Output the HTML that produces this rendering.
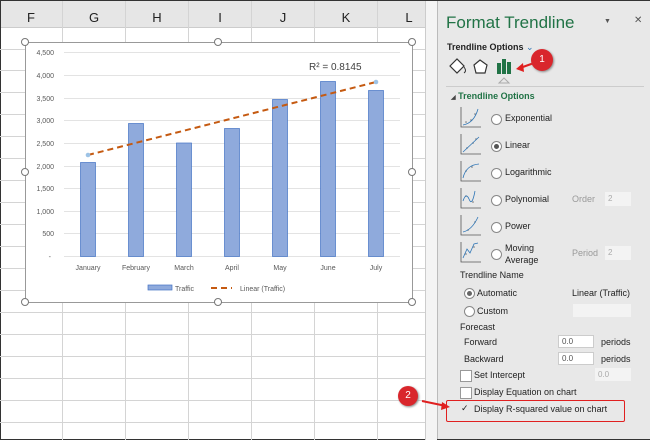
<!DOCTYPE html><html><head><style>
body{margin:0;width:650px;height:440px;overflow:hidden;font-family:"Liberation Sans",sans-serif;background:#fff;position:relative}
.a{position:absolute}
.t{font-size:9px;color:#222;position:absolute;white-space:nowrap}
.rad{position:absolute;width:9px;height:9px;border:1px solid #888;border-radius:50%;background:#fff}
.cb{position:absolute;width:10px;height:10px;border:1px solid #999;background:#fff}
.in{position:absolute;height:13px;background:#fff;border:1px solid #ccc;font-size:8px;color:#555;padding-left:3px;box-sizing:border-box;line-height:12px}
.dis{position:absolute;background:#f3f3f3}
</style></head><body>
<div class="a" style="left:0;top:0;width:650px;height:440px;border:1px solid #333;box-sizing:border-box"></div>
<div class="a" style="left:1px;top:1px;width:424px;height:26px;background:#e6e6e6;border-bottom:1px solid #ccc"></div>
<svg class="a" style="left:0;top:0" width="437" height="440">
<g stroke="#d4d4d4" stroke-width="1">
<line x1="62.5" y1="1" x2="62.5" y2="440"/><line x1="125.5" y1="1" x2="125.5" y2="440"/><line x1="188.5" y1="1" x2="188.5" y2="440"/><line x1="251.5" y1="1" x2="251.5" y2="440"/><line x1="314.5" y1="1" x2="314.5" y2="440"/><line x1="377.5" y1="1" x2="377.5" y2="440"/>
<line x1="0" y1="49.5" x2="425" y2="49.5"/><line x1="0" y1="70.5" x2="425" y2="70.5"/><line x1="0" y1="92.5" x2="425" y2="92.5"/><line x1="0" y1="114.5" x2="425" y2="114.5"/><line x1="0" y1="136.5" x2="425" y2="136.5"/><line x1="0" y1="158.5" x2="425" y2="158.5"/><line x1="0" y1="180.5" x2="425" y2="180.5"/><line x1="0" y1="202.5" x2="425" y2="202.5"/><line x1="0" y1="224.5" x2="425" y2="224.5"/><line x1="0" y1="246.5" x2="425" y2="246.5"/><line x1="0" y1="268.5" x2="425" y2="268.5"/><line x1="0" y1="290.5" x2="425" y2="290.5"/><line x1="0" y1="312.5" x2="425" y2="312.5"/><line x1="0" y1="334.5" x2="425" y2="334.5"/><line x1="0" y1="356.5" x2="425" y2="356.5"/><line x1="0" y1="378.5" x2="425" y2="378.5"/><line x1="0" y1="400.5" x2="425" y2="400.5"/><line x1="0" y1="422.5" x2="425" y2="422.5"/>
</g>
<rect x="425" y="1" width="12" height="439" fill="#f4f4f4"/><line x1="425.5" y1="1" x2="425.5" y2="440" stroke="#ccc"/>
<g font-size="13" fill="#222" text-anchor="middle" font-family="Liberation Sans"><text x="31" y="22">F</text><text x="94" y="22">G</text><text x="157" y="22">H</text><text x="220" y="22">I</text><text x="283" y="22">J</text><text x="346" y="22">K</text><text x="409" y="22">L</text></g>
<rect x="25.5" y="42.5" width="387" height="260" fill="#fff" stroke="#999"/>
<g stroke="#e3e3e3"><line x1="64" y1="52.5" x2="400" y2="52.5"/><line x1="64" y1="75.5" x2="400" y2="75.5"/><line x1="64" y1="98.5" x2="400" y2="98.5"/><line x1="64" y1="120.5" x2="400" y2="120.5"/><line x1="64" y1="143.5" x2="400" y2="143.5"/><line x1="64" y1="166.5" x2="400" y2="166.5"/><line x1="64" y1="188.5" x2="400" y2="188.5"/><line x1="64" y1="211.5" x2="400" y2="211.5"/><line x1="64" y1="233.5" x2="400" y2="233.5"/><line x1="64" y1="256.5" x2="400" y2="256.5"/></g>
<g font-size="7" fill="#595959" text-anchor="end"><text x="54" y="55">4,500</text><text x="54" y="78">4,000</text><text x="54" y="101">3,500</text><text x="54" y="123">3,000</text><text x="54" y="146">2,500</text><text x="54" y="169">2,000</text><text x="54" y="191">1,500</text><text x="54" y="214">1,000</text><text x="54" y="236">500</text><text x="51" y="259">-</text></g>
<g fill="#8faadc" stroke="#4472c4" stroke-width=".7">
<rect x="80.5" y="162.5" width="15" height="94"/><rect x="128.5" y="123.5" width="15" height="133"/><rect x="176.5" y="143" width="15" height="113.5"/><rect x="224.5" y="128.5" width="15" height="128"/><rect x="272.5" y="99.5" width="15" height="157"/><rect x="320.5" y="81.5" width="15" height="175"/><rect x="368.5" y="90.5" width="15" height="166"/></g>
<line x1="88" y1="155" x2="376" y2="82" stroke="#c55a11" stroke-width="2" stroke-dasharray="6,4"/>
<circle cx="88" cy="155" r="2.3" fill="#9dc3e6"/><circle cx="376" cy="82" r="2.3" fill="#9dc3e6"/>
<text x="309" y="70" font-size="10" fill="#404040">R² = 0.8145</text>
<g font-size="7" fill="#595959" text-anchor="middle"><text x="88" y="270">January</text><text x="136" y="270">February</text><text x="184" y="270">March</text><text x="232" y="270">April</text><text x="280" y="270">May</text><text x="328" y="270">June</text><text x="376" y="270">July</text></g>
<rect x="148" y="285" width="24" height="5" fill="#8faadc" stroke="#4472c4" stroke-width=".7"/><text x="175" y="291" font-size="7" fill="#595959">Traffic</text>
<line x1="211" y1="288" x2="232" y2="288" stroke="#c55a11" stroke-width="2" stroke-dasharray="6,4"/><text x="240" y="291" font-size="7" fill="#595959">Linear (Traffic)</text>
<g fill="#fff" stroke="#777" stroke-width="1"><circle cx="25" cy="42" r="3.5"/><circle cx="218" cy="42" r="3.5"/><circle cx="412" cy="42" r="3.5"/><circle cx="25" cy="172" r="3.5"/><circle cx="412" cy="172" r="3.5"/><circle cx="25" cy="302" r="3.5"/><circle cx="218" cy="302" r="3.5"/><circle cx="412" cy="302" r="3.5"/></g>
</svg>
<div class="a" style="left:437px;top:1px;width:212px;height:438px;background:#e8e8e8;border-left:1px solid #bbb"></div>
<div class="a" style="left:446px;top:13px;font-size:17px;color:#217346">Format Trendline</div>
<div class="a" style="left:604px;top:18px;font-size:7px;color:#555">▼</div>
<div class="a" style="left:634px;top:15px;font-size:10px;color:#555">✕</div>
<div class="a" style="left:447px;top:42px;font-size:9px;font-weight:bold;color:#222">Trendline Options <span style="color:#2e75b6;font-weight:normal">⌄</span></div>
<svg class="a" style="left:446px;top:56px" width="100" height="30">
<path d="M4 10 L11 3 L18 10 L11 17 Z" fill="#fff" stroke="#333" stroke-width="1.2"/><path d="M18 11 q3 4 0 6" stroke="#333" fill="none"/>
<path d="M34 4 L41 9 L39 17 L30 17 L28 9 Z" fill="#fff" stroke="#333" stroke-width="1.2"/>
<rect x="51" y="7" width="4" height="11" fill="#217346"/><rect x="56" y="3" width="4" height="15" fill="#217346"/><rect x="61" y="6" width="4" height="12" fill="#217346"/>
<path d="M58 22 L53 27 L63 27 Z" fill="#e8e8e8" stroke="#aaa"/>
<path d="M74 12 L88 7" stroke="#e02020" stroke-width="2"/><path d="M70 13 L77 7 L78 16 Z" fill="#e02020"/>
</svg>
<div class="a" style="left:531px;top:49px;width:22px;height:22px;border-radius:50%;background:#d9262c;color:#fff;font-size:10px;text-align:center;line-height:22px;box-shadow:1px 1px 2px #888">1</div>
<div class="a" style="left:446px;top:86px;width:198px;height:1px;background:#ccc"></div>
<div class="a" style="left:451px;top:91px;font-size:9px;font-weight:bold;color:#217346"><span style="font-size:6px;color:#444">◢</span> Trendline Options</div>
<svg class="a" style="left:460px;top:106px" width="24" height="160" fill="none" stroke="#2e75b6" stroke-width=".8">
<g stroke="#555"><path d="M1 1 V21 H21"/><path d="M1 28 V48 H21"/><path d="M1 55 V75 H21"/><path d="M1 82 V102 H21"/><path d="M1 109 V129 H21"/><path d="M1 136 V156 H21"/></g>
<g fill="#777" stroke="none"><circle cx="6" cy="16" r=".8"/><circle cx="11" cy="14" r=".8"/><circle cx="15" cy="8" r=".8"/><circle cx="7" cy="42" r=".8"/><circle cx="13" cy="37" r=".8"/><circle cx="16" cy="33" r=".8"/><circle cx="6" cy="65" r=".8"/><circle cx="12" cy="61" r=".8"/><circle cx="6" cy="90" r=".8"/><circle cx="13" cy="96" r=".8"/><circle cx="8" cy="124" r=".8"/><circle cx="15" cy="116" r=".8"/><circle cx="6" cy="148" r=".8"/><circle cx="14" cy="141" r=".8"/></g>
<path d="M3 19 Q14 17 18 3"/><path d="M3 46 L19 31"/><path d="M3 72 Q6 59 19 58"/><path d="M3 95 Q6 86 9 93 Q12 101 15 85"/><path d="M3 126 Q12 124 18 111"/><path d="M3 152 L7 143 L10 147 L14 138 L18 137"/>
</svg>
<div class="rad" style="left:491px;top:114px"></div><div class="t" style="left:505px;top:113px">Exponential</div>
<div class="rad" style="left:491px;top:141px"></div><div class="a" style="left:494px;top:144px;width:5px;height:5px;border-radius:50%;background:#555"></div><div class="t" style="left:505px;top:140px">Linear</div>
<div class="rad" style="left:491px;top:168px"></div><div class="t" style="left:505px;top:167px">Logarithmic</div>
<div class="rad" style="left:491px;top:195px"></div><div class="t" style="left:505px;top:194px">Polynomial</div>
<div class="t" style="left:572px;top:194px;color:#999">Order</div><div class="dis" style="left:605px;top:192px;width:26px;height:14px"></div><div class="t" style="left:608px;top:194px;color:#aaa;font-size:8px">2</div>
<div class="rad" style="left:491px;top:222px"></div><div class="t" style="left:505px;top:221px">Power</div>
<div class="rad" style="left:491px;top:249px"></div><div class="t" style="left:505px;top:242px;line-height:12px">Moving<br>Average</div>
<div class="t" style="left:572px;top:248px;color:#999">Period</div><div class="dis" style="left:605px;top:246px;width:26px;height:14px"></div><div class="t" style="left:608px;top:248px;color:#aaa;font-size:8px">2</div>
<div class="t" style="left:460px;top:270px">Trendline Name</div>
<div class="rad" style="left:464px;top:288px"></div><div class="a" style="left:467px;top:291px;width:5px;height:5px;border-radius:50%;background:#666"></div><div class="t" style="left:477px;top:288px">Automatic</div>
<div class="t" style="left:572px;top:288px">Linear (Traffic)</div>
<div class="rad" style="left:464px;top:306px"></div><div class="t" style="left:477px;top:306px">Custom</div>
<div class="dis" style="left:573px;top:304px;width:58px;height:13px"></div>
<div class="t" style="left:460px;top:322px">Forecast</div>
<div class="t" style="left:464px;top:337px">Forward</div><div class="in" style="left:558px;top:335px;width:36px">0.0</div><div class="t" style="left:601px;top:337px">periods</div>
<div class="t" style="left:464px;top:354px">Backward</div><div class="in" style="left:558px;top:352px;width:36px">0.0</div><div class="t" style="left:601px;top:354px">periods</div>
<div class="cb" style="left:460px;top:370px"></div><div class="t" style="left:474px;top:370px">Set Intercept</div>
<div class="dis" style="left:595px;top:368px;width:36px;height:13px"></div><div class="t" style="left:598px;top:370px;color:#aaa;font-size:8px">0.0</div>
<div class="cb" style="left:460px;top:387px"></div><div class="t" style="left:474px;top:387px">Display Equation on chart</div>
<div class="t" style="left:461px;top:403px;font-size:9px">✓</div><div class="t" style="left:474px;top:404px">Display R-squared value on chart</div>
<div class="a" style="left:446px;top:400px;width:177px;height:20px;border:1.5px solid #e02020;border-radius:2px"></div>
<svg class="a" style="left:410px;top:392px" width="40" height="24"><path d="M12 9 L36 14" stroke="#e02020" stroke-width="2"/><path d="M40 15 L32 10 L31 18 Z" fill="#e02020"/></svg>
<div class="a" style="left:398px;top:386px;width:20px;height:20px;border-radius:50%;background:#d9262c;color:#fff;font-size:10px;text-align:center;line-height:20px;box-shadow:1px 1px 2px #888">2</div>
</body></html>
